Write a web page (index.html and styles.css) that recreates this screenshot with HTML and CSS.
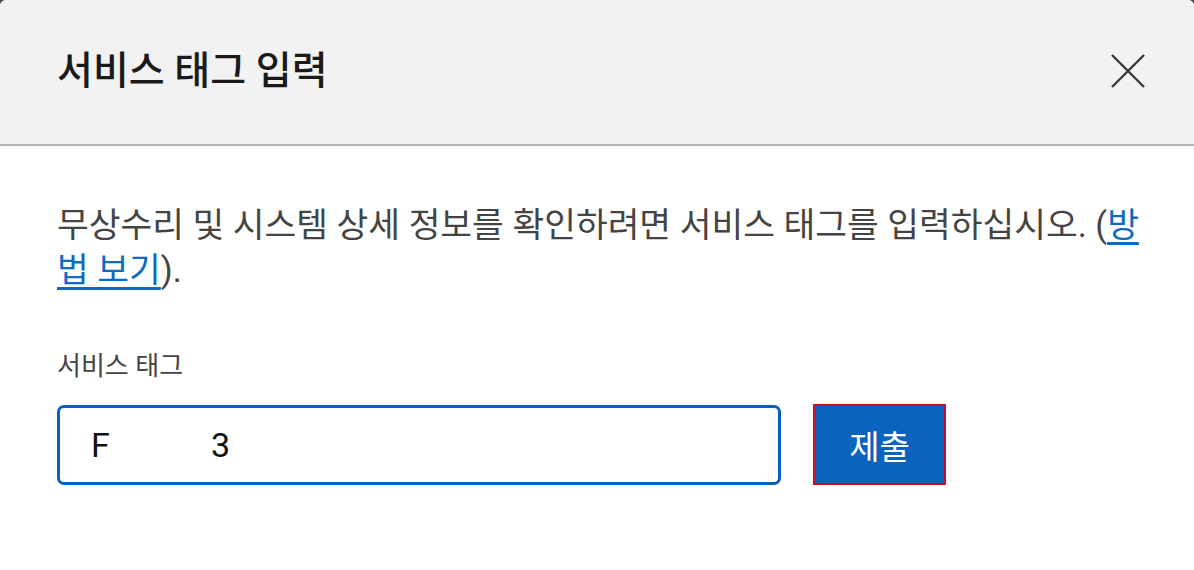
FILE: index.html
```html
<!DOCTYPE html>
<html lang="ko">
<head>
<meta charset="utf-8">
<link rel="stylesheet" href="styles.css">
</head>
<body>
<div class="dialog">
  <header class="dlg-header">
    <h1 class="dlg-title">서비스 태그 입력</h1>
    <button class="close-btn" aria-label="닫기">
      <svg width="34" height="34" viewBox="0 0 34 34"><path d="M1 1 L33 33 M33 1 L1 33" stroke="#3a3a3a" stroke-width="2.4" fill="none"/></svg>
    </button>
  </header>
  <div class="dlg-body">
    <p class="desc">무상수리 및 시스템 상세 정보를 확인하려면 서비스 태그를 입력하십시오. (<a href="#" class="link">방법 보기</a>).</p>
    <label class="field-label">서비스 태그</label>
    <div class="field-row">
      <div class="input-box">F            3</div>
      <button class="submit-btn">제출</button>
    </div>
  </div>
</div>
</body>
</html>
```
FILE: styles.css
```css
html, body {
  margin: 0;
  padding: 0;
  background: #4a4a4a;
}
body {
  font-family: "Roboto", "Noto Sans CJK KR", sans-serif;
  width: 1194px;
  height: 570px;
  overflow: hidden;
}
.dialog {
  background: #ffffff;
  height: 570px;
  border-radius: 6px 6px 0 0;
  overflow: hidden;
}
.dlg-header {
  box-sizing: border-box;
  height: 146px;
  background: #f2f2f2;
  border-bottom: 2px solid #b3b3b3;
  display: flex;
  align-items: center;
  justify-content: space-between;
  padding: 0 49px 0 57px;
}
.dlg-title {
  margin: 0 0 2px 0;
  font-size: 39px;
  line-height: 48px;
  font-weight: 500;
  color: #1a1a1a;
}
.close-btn {
  border: none;
  background: none;
  padding: 0;
  width: 34px;
  height: 34px;
  display: flex;
  margin-bottom: 2px;
}
.dlg-body {
  padding: 57px 50px 0 57px;
}
.desc {
  margin: 0;
  font-size: 34.5px;
  line-height: 45px;
  color: #444444;
}
.link {
  color: #0e6bbf;
  text-decoration: underline;
  text-underline-offset: 5px;
}
.field-label {
  display: block;
  margin-top: 57px;
  font-size: 26px;
  line-height: 32px;
  color: #444444;
}
.field-row {
  display: flex;
  align-items: center;
  gap: 32px;
  margin-top: 22px;
}
.input-box {
  box-sizing: border-box;
  width: 724px;
  height: 80px;
  border: 3px solid #0a5fbd;
  border-radius: 7px;
  padding: 0 0 0 31px;
  display: flex;
  align-items: center;
  white-space: pre;
  font-size: 34px;
  color: #111111;
}
.submit-btn {
  box-sizing: border-box;
  width: 133px;
  height: 81px;
  background: #0a63bd;
  border: 2px solid #c8102e;
  color: #ffffff;
  font-family: "Roboto", "Noto Sans CJK KR", sans-serif;
  font-size: 33px;
  font-weight: 400;
  padding: 0;
}
```
